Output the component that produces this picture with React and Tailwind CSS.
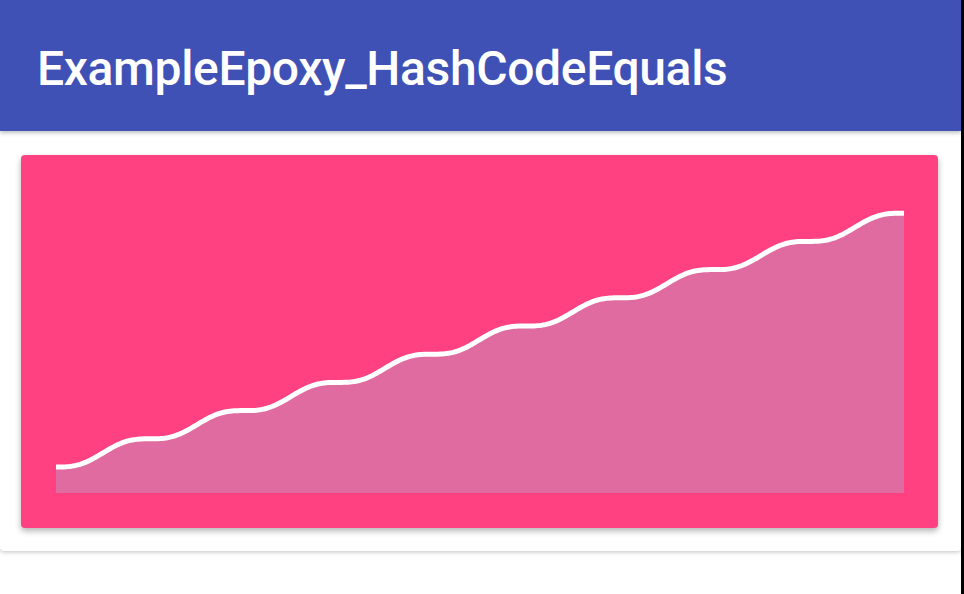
import React from 'react';

function buildChart() {
  const w = 848;
  const top = 190;
  const k = (2 * Math.PI) / 94;
  const pts = [];
  for (let t = 0; t <= w; t += 2) {
    const y = 467 - 0.3 * t + 4.5 * Math.sin(k * t) - top;
    pts.push([t, y]);
  }
  const line = pts.map((p, i) => `${i === 0 ? 'M' : 'L'}${p[0]},${p[1].toFixed(2)}`).join(' ');
  const area = `${line} L${w},303 L0,303 Z`;
  return { line, area };
}

const chart = buildChart();

export default function App() {
  return (
    <div className="flex w-[964px] h-[594px] bg-black" style={{ fontFamily: 'Roboto, sans-serif' }}>
      <div className="w-[961px] h-full bg-white flex flex-col">
        <header className="h-[131px] bg-[#3F51B5] flex items-center pl-[37px] pt-[6px] shadow-[0_2px_4px_rgba(0,0,0,0.25)] relative z-10">
          <h1 className="text-[48px] font-medium text-white leading-none tracking-[-0.35px]">ExampleEpoxy_HashCodeEquals</h1>
        </header>
        <div className="bg-white rounded-b-[4px] shadow-[0_1px_4px_rgba(0,0,0,0.25)] pt-[24px] pb-[23px] pl-[21px] pr-[23px]">
          <div className="bg-[#FF4081] rounded-[4px] h-[373px] p-[35px] shadow-[0_3px_6px_rgba(0,0,0,0.3)]">
            <svg width="848" height="303" viewBox="0 0 848 303" className="block">
              <path d={chart.area} fill="#E06BA0" />
              <path d={chart.line} fill="none" stroke="#fff" strokeWidth="5" />
            </svg>
          </div>
        </div>
      </div>
    </div>
  );
}
